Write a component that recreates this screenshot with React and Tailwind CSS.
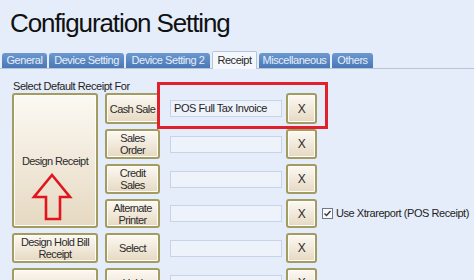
import React from "react";

const btn =
  "border-2 border-[#a39b60] rounded-[3px] bg-linear-to-b from-[#fcf9f3] to-[#e6d9c2] text-[#2b2b2b] flex items-center justify-center text-center leading-[12px] tracking-[-0.6px] shadow-[inset_0_0_0_1px_#fffdf8]";
const input =
  "w-[112px] h-[17px] self-center bg-[#edf2fb] border border-[#c6d4ea] text-[#1e1e1e] pl-[3px] flex items-center";

function Tab({ w, label, active }) {
  return active ? (
    <div
      className={`${w} h-[18px] -mb-px bg-[#f4f8fd] border border-b-0 border-[#b7c5d9] rounded-t-[2px] text-[#2a2a2a] flex items-center justify-center`}
    >
      {label}
    </div>
  ) : (
    <div
      className={`${w} h-[15px] bg-linear-to-b from-[#6d98d0] to-[#4a78b6] rounded-t-[3px] text-[#e6effb] flex items-center justify-center`}
    >
      {label}
    </div>
  );
}

export default function App() {
  return (
    <div className="relative w-[474px] h-[280px] overflow-hidden bg-[#e4edf9] font-['Liberation_Sans',Arial,sans-serif] text-[11px] tracking-[-0.45px]">
      <div className="h-[51px] pl-[10px] pt-[10px]">
        <div className="text-[26px] leading-[26px] tracking-[-1.1px] text-[#111]">
          Configuration Setting
        </div>
      </div>
      <div className="flex items-end gap-[2px] h-[18px] pl-[2px] border-b border-[#b7c5d9]">
        <Tab w="w-[45px]" label="General" />
        <Tab w="w-[75px]" label="Device Setting" />
        <Tab w="w-[84px]" label="Device Setting 2" />
        <Tab w="w-[45px]" label="Receipt" active />
        <Tab w="w-[71px]" label="Miscellaneous" />
        <Tab w="w-[41px]" label="Others" />
      </div>
      <div className="pl-[12px]">
        <div className="mt-[11px] pl-[1px] h-[12px] leading-[12px] text-[#1e1e1e]">
          Select Default Receipt For
        </div>
        <div className="mt-[1px] grid grid-cols-[93px_65px_116px_36px_1fr] grid-rows-[31px_30px_30px_29px_30px_30px] gap-y-[5px]">
          <div className={`${btn} relative row-span-4 w-[86px]`}>
            <span>Design Receipt</span>
            <svg
              className="absolute left-0 top-0"
              width="86"
              height="135"
              viewBox="0 0 86 135"
            >
              <polygon
                points="38,80 56,102 46,102 46,124 32,124 32,102 20,102"
                fill="none"
                stroke="#e3141b"
                strokeWidth="2.6"
                strokeLinejoin="miter"
              />
            </svg>
          </div>
          <div className={`${btn} w-[55px]`}>Cash Sale</div>
          <div className={input}>POS Full Tax Invoice</div>
          <div className={`${btn} w-[31px] text-[12px]`}>X</div>
          <div />

          <div className={`${btn} w-[55px]`}>
            Sales
            <br />
            Order
          </div>
          <div className={input} />
          <div className={`${btn} w-[31px] text-[12px]`}>X</div>
          <div />

          <div className={`${btn} w-[55px]`}>
            Credit
            <br />
            Sales
          </div>
          <div className={input} />
          <div className={`${btn} w-[31px] text-[12px]`}>X</div>
          <div />

          <div className={`${btn} w-[55px]`}>
            Alternate
            <br />
            Printer
          </div>
          <div className={input} />
          <div className={`${btn} w-[31px] text-[12px]`}>X</div>
          <div className="flex items-center gap-[3px] text-[#1e1e1e]">
            <svg width="11" height="11" viewBox="0 0 11 11">
              <rect x="0.5" y="0.5" width="10" height="10" fill="#f7f9fc" stroke="#6e7a8a" />
              <path d="M2.5 5.5 L4.5 7.5 L8.5 3" fill="none" stroke="#333" strokeWidth="1.3" />
            </svg>
            <span>Use Xtrareport (POS Receipt)</span>
          </div>

          <div className={`${btn} w-[86px]`}>
            Design Hold Bill
            <br />
            Receipt
          </div>
          <div className={`${btn} w-[55px]`}>Select</div>
          <div className={input} />
          <div className={`${btn} w-[31px] text-[12px]`}>X</div>
          <div />

          <div className={`${btn} w-[86px]`} />
          <div className={`${btn} w-[55px]`}>Hold</div>
          <div className={input} />
          <div className={`${btn} w-[31px] text-[12px]`}>X</div>
          <div />
        </div>
      </div>
      <div className="absolute left-[157px] top-[82px] w-[171px] h-[47px] border-[3px] border-[#e2202c]" />
    </div>
  );
}
